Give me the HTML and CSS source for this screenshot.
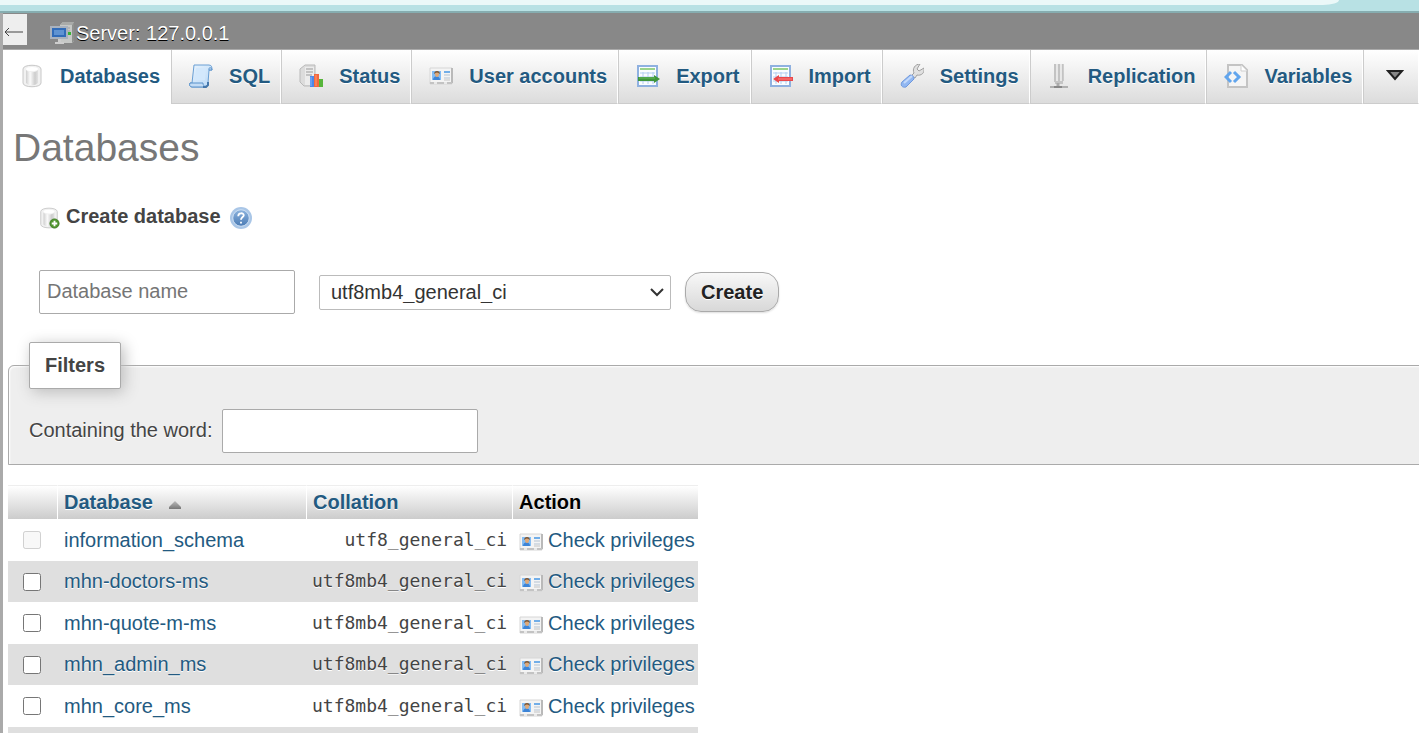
FILE: index.html
```html
<!DOCTYPE html>
<html lang="en">
<head>
<meta charset="UTF-8">
<meta name="viewport" content="width=device-width, initial-scale=1.0">
<title>127.0.0.1 / Databases</title>
<link rel="stylesheet" href="styles.css">
</head>
<body>
<svg class="sprite" aria-hidden="true">
    <defs>
        <linearGradient id="metal" x1="0" x2="1" y1="0" y2="0">
            <stop offset="0" stop-color="#cfcfcf"/>
            <stop offset=".35" stop-color="#fafafa"/>
            <stop offset=".75" stop-color="#cdcdcd"/>
            <stop offset="1" stop-color="#e2e2e2"/>
        </linearGradient>
        <linearGradient id="paper" x1="0" x2="1" y1="0" y2="1">
            <stop offset="0" stop-color="#e9f4fe"/>
            <stop offset="1" stop-color="#b9d8f6"/>
        </linearGradient>
        <linearGradient id="ball" x1="0" x2="0" y1="0" y2="1">
            <stop offset="0" stop-color="#8db4de"/>
            <stop offset="1" stop-color="#4a7bb5"/>
        </linearGradient>
        <linearGradient id="caret" x1="0" x2="0" y1="0" y2="1">
            <stop offset="0" stop-color="#bbb"/>
            <stop offset="1" stop-color="#777"/>
        </linearGradient>
    </defs>
    <symbol id="server" viewBox="0 0 24 24">
        <path d="M10 4l3-3h11v19l-2 2H10z" fill="#c6c8c6"/>
        <path d="M10 4l3-3h11l-2 3z" fill="#a9aba9"/>
        <path d="M22 4l2-3v19l-2 2z" fill="#8f918f"/>
        <path d="M13 7h7M13 10h7" stroke="#a0a0a0"/>
        <path d="M18 11h3v3h-3z" fill="#36b336"/>
        <path d="M0 5h18v13H0z" fill="#a9b2be"/>
        <path d="M2 7h14v9H2z" fill="#316cb9"/>
        <path d="M4 9h10v5H4z" fill="#5f93d2"/>
        <path d="M8 18h3v3h3v2H5v-2h3z" fill="#cdcdcd"/>
    </symbol>
    <symbol id="db" viewBox="0 0 24 24">
        <path d="M3 5c0-5 18-5 18 0v14c0 5-18 5-18 0z" fill="#f1f1f1" stroke="#c8c8c8"/>
        <path d="M6 6c3 3 9 3 12 0v13c-3 3-9 3-12 0z" fill="url(#metal)"/>
        <ellipse cx="12" cy="5" rx="6" ry="2" fill="#fff"/>
    </symbol>
    <symbol id="sql" viewBox="0 0 24 24">
        <path d="M5 1h15c3 0 3 3 3 5h-3l-1 13c0 3-1 4-3 4H3c-2 0-3-2-2-4h2z" fill="url(#paper)" stroke="#6a9fd4"/>
        <path d="M20 6c-1-3 3-3 3 0zM1 19h13c0 2 1 4 3 3-1 1-1 1-2 1H3c-2 0-3-2-2-4z" fill="#c3dcf5" stroke="#5b92cb"/>
        <path d="M7 4h10l-1 12H6z" fill="#d3e8fc"/>
        <path d="M19 18v3l-2 2h-3" fill="none" stroke="#4577ab" stroke-width="2"/>
    </symbol>
    <symbol id="status" viewBox="0 0 24 24">
        <path d="M1 5l5-4h10v21H5l-4-4z" fill="#dcdcdc" stroke="#b9b9b9"/>
        <path d="M6 3h9v18H6z" fill="#ececec"/>
        <path d="M7 5h7M7 8h7M7 11h6" stroke="#999"/>
        <path d="M11 12h4v11h-4z" fill="#4c88ea"/>
        <path d="M15 10h5v13h-5z" fill="#f3683f"/>
        <path d="M20 15h4v8h-4z" fill="#57b53b"/>
        <path d="M12 13v9" stroke="#85b4fa"/>
        <path d="M17 11v11" stroke="#fb9a72"/>
    </symbol>
    <symbol id="users" viewBox="0 0 24 24">
        <path d="M1 4h22v16H1z" fill="#f4f4f4" stroke="#d6d6d6"/>
        <path d="M23 4v15" stroke="#b9b9b9" stroke-width="2"/>
        <path d="M1 19h22" stroke="#c3c3c3" stroke-width="2"/>
        <path d="M5 18h3v2H5zM15 18h3v2h-3z" fill="#e9e9e9"/>
        <path d="M3 7h9v9H3z" fill="#82bcf4"/>
        <path d="M4 16c0-5 7-5 7 0z" fill="#3d84d6"/>
        <ellipse cx="8" cy="10" rx="2" ry="3" fill="#dfa877"/>
        <path d="M5 10c0-4 6-4 6 0-2-2-4-2-6 0z" fill="#7a5738"/>
        <path d="M15 8h6" stroke="#72aee8" stroke-width="2"/>
        <path d="M15 11h6M15 14h6" stroke="#b5c3d2"/>
        <path d="M15 16h6" stroke="#c4c4c4"/>
    </symbol>
    <symbol id="grid" viewBox="0 0 24 24">
        <path d="M2 2h19v20H2z" fill="#fafdff" stroke="#8fb1e0" stroke-width="2"/>
        <path d="M4 5h15" stroke="#9bd38c" stroke-width="2"/>
        <path d="M4 9h15M4 13h15M4 17h15M7 8v12M12 8v12M17 8v12" stroke="#b4cff0"/>
    </symbol>
    <symbol id="export" viewBox="0 0 24 24">
        <use href="#grid"/>
        <path d="M2 13h16v-2l6 4-6 4v-2H2z" fill="#3e963b"/>
        <path d="M3 14h16" stroke="#67b85d"/>
    </symbol>
    <symbol id="import" viewBox="0 0 24 24">
        <use href="#grid"/>
        <path d="M24 13H10v-2l-6 4 6 4v-2h14z" fill="#e9484b"/>
        <path d="M23 15H9" stroke="#ff8381"/>
    </symbol>
    <symbol id="wrench" viewBox="0 0 24 24">
        <path d="M11 12l3-3c-2-4 1-9 6-9l-3 5 2 2 5-3c1 5-3 8-7 7l-2 3z" fill="#e0e0e0" stroke="#a0a0a0"/>
        <path d="M2 18l8-7c3 0 4 2 4 4l-8 8c-4 1-6-2-4-5z" fill="#91b7f2" stroke="#6f98dc"/>
        <path d="M4 19l8-7" stroke="#c3dafb" stroke-width="2"/>
    </symbol>
    <symbol id="replication" viewBox="0 0 24 24">
        <path d="M6 0h9v18H6z" fill="#ddd"/>
        <path d="M7 0v18M11 0v19M15 0v17" stroke="#a9a9a9"/>
        <path d="M9 0v18M13 0v17" stroke="#f2f2f2"/>
        <path d="M7 17h8v3H7z" fill="#c4c4c4"/>
        <path d="M10 19v4" stroke="#aaa" stroke-width="3"/>
        <path d="M2 23h18" stroke="#b0b0b0" stroke-width="2"/>
        <path d="M6 23h8" stroke="#888" stroke-width="2"/>
    </symbol>
    <symbol id="vars" viewBox="0 0 24 24">
        <path d="M4 1h14l5 5v17H4z" fill="#f5f5f5" stroke="#c4c4c4" stroke-width="2"/>
        <path d="M17 1v6h6" fill="#fff" stroke="#cfcfcf"/>
        <path d="M7 8l-5 5 5 5M10 8l5 5-5 5" fill="none" stroke="#61a5ed" stroke-width="3"/>
    </symbol>
    <symbol id="db-add" viewBox="0 0 24 24">
        <use href="#db"/>
        <circle cx="18" cy="18" r="5" fill="#51962f" stroke="#3d7d22"/>
        <path d="M15 18h6M18 15v6" stroke="#fff" stroke-width="2"/>
    </symbol>
    <symbol id="help" viewBox="0 0 24 24">
        <circle cx="12" cy="12" r="12" fill="#a9c6e7"/>
        <circle cx="12" cy="12" r="9" fill="url(#ball)" stroke="#d4e4f5"/>
        <path d="M9 10c0-4 6-4 6-1 0 2-3 2-3 5" fill="none" stroke="#fff" stroke-width="2"/>
        <path d="M11 16h2v2h-2z" fill="#fff"/>
    </symbol>
</svg>

<div class="browser-bar"><div class="browser-edge"></div></div>

<div class="page">
    <header class="server-bar">
        <a class="back" href="#" aria-label="Hide panel">
            <svg width="20" height="12" viewBox="0 0 20 12" aria-hidden="true"><path d="M20 6H2M6 2L2 6l4 4" fill="none" stroke="#444"/></svg>
        </a>
        <a class="server-link" href="#"><svg class="icon"><use href="#server"/></svg>Server: 127.0.0.1</a>
    </header>

    <nav class="tabs">
        <a class="tab active" href="#"><svg class="icon"><use href="#db"/></svg>Databases</a>
        <a class="tab" href="#"><svg class="icon"><use href="#sql"/></svg>SQL</a>
        <a class="tab" href="#"><svg class="icon"><use href="#status"/></svg>Status</a>
        <a class="tab" href="#"><svg class="icon"><use href="#users"/></svg>User accounts</a>
        <a class="tab" href="#"><svg class="icon"><use href="#export"/></svg>Export</a>
        <a class="tab" href="#"><svg class="icon"><use href="#import"/></svg>Import</a>
        <a class="tab" href="#"><svg class="icon"><use href="#wrench"/></svg>Settings</a>
        <a class="tab" href="#"><svg class="icon"><use href="#replication"/></svg>Replication</a>
        <a class="tab" href="#"><svg class="icon"><use href="#vars"/></svg>Variables</a>
        <a class="tab more" href="#" aria-label="More">
            <svg width="18" height="12" viewBox="0 0 18 12" aria-hidden="true"><path d="M2 1h14L9 9z" fill="#888" stroke="#222" stroke-width="2"/></svg>
        </a>
    </nav>

    <main>
        <h1>Databases</h1>

        <form class="create-form">
            <h2><svg class="icon small"><use href="#db-add"/></svg>Create database
                <a class="help" href="#" aria-label="Documentation"><svg class="icon small"><use href="#help"/></svg></a>
            </h2>
            <div class="create-row">
                <input type="text" class="text-field" placeholder="Database name" aria-label="Database name">
                <div class="select-box">
                    <select aria-label="Collation">
                        <option>utf8mb4_general_ci</option>
                    </select>
                    <svg class="chevron" width="16" height="10" viewBox="0 0 16 10" aria-hidden="true"><path d="M2 2l6 6 6-6" fill="none" stroke="#333" stroke-width="2"/></svg>
                </div>
                <button type="button" class="create-button">Create</button>
            </div>
        </form>

        <fieldset class="filters">
            <legend>Filters</legend>
            <label for="filterText">Containing the word:</label>
            <input type="text" class="text-field" id="filterText">
        </fieldset>

        <table class="databases">
            <thead>
                <tr>
                    <th class="check"></th>
                    <th class="name"><a href="#">Database<svg class="sort" width="12" height="8" viewBox="0 0 12 8" aria-hidden="true"><path d="M6 0l6 6v2H0V6z" fill="url(#caret)"/></svg></a></th>
                    <th class="collation"><a href="#">Collation</a></th>
                    <th class="action">Action</th>
                </tr>
            </thead>
            <tbody>
                <tr>
                    <td class="check"><input type="checkbox" aria-label="information_schema" disabled></td>
                    <td><a href="#">information_schema</a></td>
                    <td class="mono">utf8_general_ci</td>
                    <td><a class="priv" href="#"><svg class="icon"><use href="#users"/></svg>Check privileges</a></td>
                </tr>
                <tr>
                    <td class="check"><input type="checkbox" aria-label="mhn-doctors-ms"></td>
                    <td><a href="#">mhn-doctors-ms</a></td>
                    <td class="mono">utf8mb4_general_ci</td>
                    <td><a class="priv" href="#"><svg class="icon"><use href="#users"/></svg>Check privileges</a></td>
                </tr>
                <tr>
                    <td class="check"><input type="checkbox" aria-label="mhn-quote-m-ms"></td>
                    <td><a href="#">mhn-quote-m-ms</a></td>
                    <td class="mono">utf8mb4_general_ci</td>
                    <td><a class="priv" href="#"><svg class="icon"><use href="#users"/></svg>Check privileges</a></td>
                </tr>
                <tr>
                    <td class="check"><input type="checkbox" aria-label="mhn_admin_ms"></td>
                    <td><a href="#">mhn_admin_ms</a></td>
                    <td class="mono">utf8mb4_general_ci</td>
                    <td><a class="priv" href="#"><svg class="icon"><use href="#users"/></svg>Check privileges</a></td>
                </tr>
                <tr>
                    <td class="check"><input type="checkbox" aria-label="mhn_core_ms"></td>
                    <td><a href="#">mhn_core_ms</a></td>
                    <td class="mono">utf8mb4_general_ci</td>
                    <td><a class="priv" href="#"><svg class="icon"><use href="#users"/></svg>Check privileges</a></td>
                </tr>
                <tr>
                    <td colspan="4"></td>
                </tr>
            </tbody>
        </table>
    </main>
</div>
</body>
</html>
```
FILE: styles.css
```css
* {
    box-sizing: border-box;
}
body {
    display: flex;
    flex-direction: column;
    margin: 0;
    height: 100vh;
    overflow: hidden;
    font-family: "Liberation Sans", Arial, sans-serif;
    font-size: 20px;
    line-height: 24px;
    color: #444;
    background: #fff;
}
a {
    color: #235a81;
    text-decoration: none;
}
.sprite {
    display: block;
    width: 0;
    height: 0;
}
.icon {
    width: 24px;
    height: 24px;
    flex: none;
}
.icon.small {
    width: 22px;
    height: 22px;
}
.browser-bar {
    flex: none;
    height: 13px;
    padding-right: 80px;
    background: #b8e1e4;
    border-bottom: 2px solid #86adb0;
}
.browser-edge {
    height: 5px;
    background: #ebf8f8;
    border-bottom-right-radius: 16px 5px;
}
.page {
    flex: 1;
    min-height: 0;
    overflow: hidden;
    border-left: 3px solid #aaa;
}

/* server bar */
.server-bar {
    display: flex;
    align-items: flex-start;
    height: 37px;
    padding-top: 1px;
    background: #888;
    border-bottom: 1px solid #aaa;
}
.back {
    display: flex;
    align-items: center;
    width: 24px;
    height: 31px;
    padding-top: 4px;
    background: #eee;
}
.server-link {
    display: flex;
    align-items: center;
    margin-left: 23px;
    padding-top: 7px;
    color: #fff;
    text-shadow: 0 1px 0 #000;
}
.server-link .icon {
    margin-right: 2px;
}

/* top menu */
.tabs {
    display: flex;
    height: 54px;
    overflow: hidden;
}
.tab {
    display: flex;
    align-items: center;
    flex: none;
    gap: 16px;
    padding: 0 10px 2px 17px;
    border-left: 1px solid #ccc;
    border-right: 1px solid #fff;
    border-bottom: 1px solid #ccc;
    background: linear-gradient(#fff, #dcdcdc);
    font-weight: bold;
    text-shadow: 0 1px 0 #fff;
}
.tab.active {
    background: #fff;
    border-left: none;
    border-bottom-color: #fff;
}
.tab.more {
    flex: 1;
    padding-left: 22px;
}

h1 {
    margin: 0 0 0 10px;
    padding-top: 20px;
    font-size: 39px;
    line-height: 48px;
    font-weight: normal;
    color: #777;
}

/* create database */
.create-form {
    padding: 31px 0 0 35px;
}
.create-form h2 {
    display: flex;
    align-items: center;
    gap: 6px;
    margin: 0;
    font-size: 20px;
    line-height: 24px;
}
.create-form h2 .icon {
    display: block;
    margin-top: 4px;
}
.help {
    margin-left: 3px;
}
.create-row {
    display: flex;
    align-items: center;
    margin: 41px 0 0 1px;
}
.text-field {
    width: 256px;
    height: 44px;
    padding: 0 7px 2px;
    border: 1px solid #aaa;
    border-radius: 2px;
    background: #fff;
    color: #333;
    font-family: inherit;
    font-size: 20px;
}
.select-box {
    position: relative;
    width: 352px;
    margin: 0 14px 0 24px;
}
.select-box select {
    display: block;
    width: 100%;
    height: 35px;
    padding: 0 30px 1px 11px;
    appearance: none;
    border: 1px solid #bbb;
    border-radius: 2px;
    background: #fff;
    color: #333;
    font-family: inherit;
    font-size: 20px;
}
.chevron {
    position: absolute;
    right: 6px;
    top: 12px;
    pointer-events: none;
}
.create-button {
    height: 40px;
    padding: 0 15px;
    border: 1px solid #aaa;
    border-radius: 16px;
    background: linear-gradient(#f8f8f8, #d8d8d8);
    box-shadow: 0 1px 2px #ddd;
    color: #222;
    font-family: inherit;
    font-size: 20px;
    font-weight: bold;
    text-shadow: 0 1px 0 #fff;
}

/* filters */
.filters {
    display: flex;
    align-items: center;
    margin: 28px -10px 0 5px;
    padding: 20px 20px 11px;
    border: 1px solid #aaa;
    border-radius: 6px 0 0 0;
    background: #eee;
    box-shadow: 1px 1px 2px #fff inset;
    text-shadow: 0 1px 0 #fff;
}
.filters legend {
    padding: 10px 15px 11px;
    border: 1px solid #aaa;
    border-radius: 2px;
    background: #fff;
    box-shadow: 3px 3px 15px #bbb;
    font-weight: bold;
}
.filters label {
    margin-right: 10px;
    padding-bottom: 2px;
}

/* database list */
.databases {
    margin: 20px 0 0 5px;
    border-collapse: separate;
    border-spacing: 0;
}
.databases th {
    height: 34px;
    padding: 0 6px 1px;
    border-top: 1px solid #eee;
    border-right: 1px solid #fff;
    background: linear-gradient(#fff, #ccc);
    color: #000;
    text-align: left;
    text-shadow: 0 1px 0 #fff;
}
.databases th:last-child {
    border-right: none;
}
.databases th.check {
    width: 50px;
}
.databases th.name {
    width: 249px;
}
.databases th.collation {
    width: 206px;
}
.databases td {
    height: 41px;
    padding: 0 6px 1px;
    text-shadow: 0 1px 0 #fff;
}
.databases tr:nth-child(odd) td {
    height: 42px;
}
.databases td:last-child {
    padding-right: 3px;
}
.databases tbody tr:nth-child(even) {
    background: #dfdfdf;
}
.databases td.check {
    padding: 0 0 0 15px;
}
.check input {
    display: block;
    width: 18px;
    height: 18px;
    margin: 0;
}
.sort {
    margin-left: 16px;
}
.databases td.mono {
    padding-left: 5px;
    font-family: "DejaVu Sans Mono", monospace;
    font-size: 18px;
    text-align: right;
}
.priv {
    display: flex;
    align-items: center;
    gap: 5px;
}
.priv .icon {
    margin-top: 4px;
}
```
